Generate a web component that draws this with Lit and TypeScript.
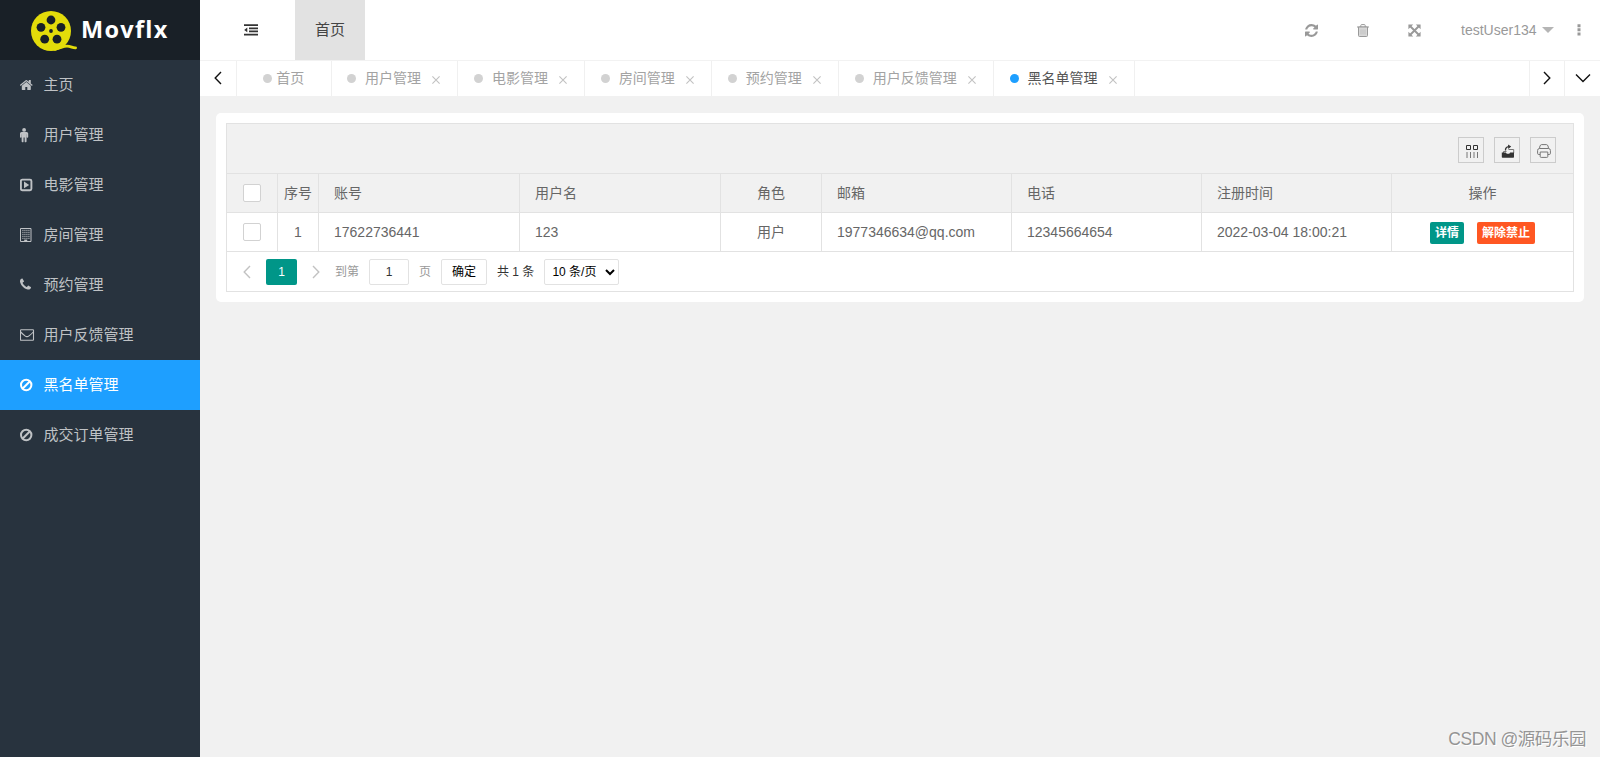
import { LitElement, html, svg, css } from "lit";
import { customElement } from "lit/decorators.js";
import { classMap } from "lit/directives/class-map.js";

const HOME = "M1472 992v480q0 26-19 45t-45 19h-384v-384h-256v384h-384q-26 0-45-19t-19-45v-480q0-1 .5-3t.5-3l575-474 575 474q1 2 1 6zm223-69l-62 74q-8 9-21 11h-3q-13 0-21-7l-692-577-692 577q-12 8-24 7-13-2-21-11l-62-74q-8-10-7-23.5t11-21.5l719-599q32-26 76-26t76 26l244 204v-195q0-14 9-23t23-9h192q14 0 23 9t9 23v408l219 182q10 8 11 21.5t-7 23.5z";
const PHONE = "M1600 1240q0 27-10 70.5t-21 68.5q-21 50-122 106-94 51-186 51-27 0-52.5-3.5t-57.5-12.5-47.5-14.5-55.5-20.5-49-18q-98-35-175-83-128-79-264.5-215.5t-215.5-264.5q-48-77-83-175-3-9-18-49t-20.5-55.5-14.5-47.5-12.5-57.5-3.5-52.5q0-92 51-186 56-101 106-122 25-11 68.5-21t70.5-10q14 0 21 3 18 6 53 76 11 19 30 54t35 63.5 31 53.5q3 4 17.5 25t21.5 35.5 7 28.5q0 20-28.5 50t-62 55-62 53-28.5 46q0 9 5 22.5t8.5 20.5 14 24 11.5 19q76 137 174 235t235 174q2 1 19 11.5t24 14 20.5 8.5 22.5 5q18 0 46-28.5t53-62 55-62 50-28.5q14 0 28.5 7t35.5 21.5 25 17.5q25 15 53.5 31t63.5 35 54 30q70 35 76 53 3 7 3 21z";
const REFRESH = "M1639 1056q0 5-1 7-64 268-268 434.5t-478 166.5q-146 0-282.5-55t-243.5-157l-129 129q-19 19-45 19t-45-19-19-45v-448q0-26 19-45t45-19h448q26 0 45 19t19 45-19 45l-137 137q71 66 161 102t187 36q134 0 250-65t186-179q11-17 53-117 8-23 30-23h192q13 0 22.5 9.5t9.5 22.5zm25-800v448q0 26-19 45t-45 19h-448q-26 0-45-19t-19-45 19-45l138-138q-148-137-349-137-134 0-250 65t-186 179q-11 17-53 117-8 23-30 23h-199q-13 0-22.5-9.5t-9.5-22.5v-7q65-268 270-434.5t480-166.5q146 0 284 55.5t245 156.5l130-129q19-19 45-19t45 19 19 45z";

const windows = [];
for (let r = 0; r < 5; r++) for (let c = 0; c < 4; c++) windows.push([2.3 + c * 2, 4.8 + r * 2]);

const ban = svg`<circle cx="6.2" cy="10" r="5.2" fill="none" stroke="currentColor" stroke-width="2"/><path d="M2.700 13.500 9.700 6.500" stroke="currentColor" stroke-width="2"/>`;
const icons: Record<string, unknown> = {
  home: svg`<path transform="translate(-.7 3) scale(.0078125)" fill="currentColor" d=${HOME}/>`,
  male: svg`<g fill="currentColor"><circle cx="4.1" cy="4.9" r="1.9"/><path d="M1.6 7h5A1.6 1.6 0 0 1 8.200 8.600V12a.75.75 0 0 1-1.500 0V9.200h-.15v7a.8.8 0 0 1-1.900.2V12.500h-1.100v3.900a.8.8 0 0 1-1.900-.2v-7H1.500V12A.75.75 0 0 1 0 12V8.600A1.600 1.600 0 0 1 1.600 7z"/></g>`,
  movie: svg`<rect x=".9" y="4.600" width="10.500" height="10.600" rx="1.400" fill="none" stroke="currentColor" stroke-width="1.900"/><path d="M4 6.600v6.600L9.200 9.900z" fill="currentColor"/>`,
  building: svg`<path d="M.5 3.500h10.500v13H.5z" fill="none" stroke="currentColor"/>${windows.map(([x, y]) => svg`<rect x=${x} y=${y} width="1.200" height="1.200" fill="currentColor" opacity=".8"/>`)}<path d="M4.200 14.600h3v2h-3z" fill="currentColor"/>`,
  phone: svg`<path transform="translate(-1.500 2.600) scale(.0078125)" fill="currentColor" d=${PHONE}/>`,
  mail: svg`<rect x=".5" y="4.800" width="13" height="10.500" rx=".6" fill="none" stroke="currentColor" stroke-width="1.100"/><path d="M.7 7q2 2 4.300 3.900Q7 12.400 9 10.900 11.500 9 13.300 7" fill="none" stroke="currentColor" stroke-width="1.100"/>`,
  ban,
};

const menu = [
  ["home", "主页"], ["male", "用户管理"], ["movie", "电影管理"], ["building", "房间管理"],
  ["phone", "预约管理"], ["mail", "用户反馈管理"], ["ban", "黑名单管理"], ["ban", "成交订单管理"],
];
const tabs = ["首页", "用户管理", "电影管理", "房间管理", "预约管理", "用户反馈管理", "黑名单管理"];
const active = "黑名单管理";

const chevron = (w: number, h: number, d: string, sw = 1.4) =>
  html`<svg width=${w} height=${h} viewBox="0 0 ${w} ${h}"><path d=${d} fill="none" stroke="currentColor" stroke-width=${sw}/></svg>`;

@customElement("app-root")
export class AppRoot extends LitElement {
  static styles = css`
    :host { display: flex; position: relative; height: 757px; overflow: hidden; background: #f1f1f1; color: #666;
      font: 14px/24px "Liberation Sans", "Noto Sans CJK SC", sans-serif; }
    * { box-sizing: border-box; }
    svg { display: block; flex: none; }
    .side { flex: none; width: 200px; background: #28333e; }
    .logo { display: flex; align-items: center; height: 60px; padding-left: 30px; background: #192027; }
    .brand { margin: -3px 0 0 3px; color: #fff; font: 700 23.500px/30px "Open Sans", sans-serif; letter-spacing: 1.300px; }
    .item { display: flex; align-items: center; height: 50px; padding-left: 20px; font-size: 15px; color: #bfc2c5; }
    .item svg { margin-right: -.6px; }
    .item.on { background: #1e9fff; color: #fff; }
    .main { flex: 1; min-width: 0; }
    .head { display: flex; align-items: center; height: 60px; background: #fff; color: #999; }
    .fold { display: flex; width: 95px; padding-left: 44px; color: #333; }
    .nav { width: 70px; line-height: 60px; text-align: center; background: #e2e2e2; color: #444; font-size: 15px; }
    .tools { display: flex; align-items: center; margin-left: auto; padding-right: 19.500px; }
    .ico { width: 51.500px; display: flex; justify-content: center; }
    .user { margin: 0 5px 0 20.500px; }
    .caret { margin-right: 23px; border: 6px solid transparent; border-top-color: #b5b5b5; border-bottom: 0; }
    .tabs { display: flex; height: 36px; border-top: 1px solid #f2f2f2; background: #fff; color: #999; }
    .arrow { display: flex; align-items: center; justify-content: center; width: 35px; border-left: 1px solid #f0f0f0; padding-bottom: 1px; color: #111; }
    .first { width: 36.800px; padding-left: 1px; border-left: 0; border-right: 1px solid #f0f0f0; }
    .arrow.last { width: 36px; }
    .tab { display: flex; align-items: center; padding: 0 17.400px 2px 15.500px; border-right: 1px solid #f0f0f0; white-space: nowrap; color: #a3a3a3; }
    .tab.start { padding: 0 26.300px 2px 26px; }
    .tab.on { color: #555; }
    .dot { width: 9px; height: 9px; margin: 2px 9px 0 0; border-radius: 50%; background: #d2d2d2; }
    .start .dot { margin-right: 4.500px; }
    .on .dot { background: #1e9fff; }
    .x { margin: 4px 0 0 11px; color: #c2c2c2; }
    .grow { flex: 1; }
    .card { margin: 17px 16px 16px; padding: 10px; border-radius: 5px; background: #fff; height: 189px; }
    .grid { border: 1px solid #e2e2e2; height: 169px; }
    .bar { display: flex; justify-content: flex-end; gap: 10px; height: 50px; padding: 13px 17px 0 0; background: #f1f1f1; border-bottom: 1px solid #e2e2e2; }
    .btn { display: flex; align-items: center; justify-content: center; width: 26px; height: 26px; padding: 1px 0 0 1px; border: 1px solid #ccc; color: #333; }
    .row { display: grid; grid-template-columns: 51px 41px 201px 201px 101px 190px 190px 190px 1fr; height: 39px; border-bottom: 1px solid #e2e2e2; }
    .row.th { background: #f1f1f1; }
    .cell { display: flex; align-items: center; padding: 0 15px; border-right: 1px solid #e2e2e2; white-space: nowrap; }
    .cell:last-child { border-right: 0; }
    .mid { justify-content: center; padding: 0; }
    .check { width: 18px; height: 18px; border: 1px solid #d2d2d2; border-radius: 2px; background: #fff; }
    .tag { height: 22px; margin-top: 2px; padding: 0 5px; border-radius: 2px; background: #009688; color: #fff; font-size: 12px; font-weight: 700; line-height: 22px; }
    .tag.red { margin-left: 13px; background: #ff5722; }
    .pager { display: flex; align-items: center; height: 40px; padding: 0 0 1px 16px; font-size: 12px; color: #333; }
    .pager > * { flex: none; }
    .pale { color: #c2c2c2; }
    .pale + .gray { margin-left: 15px; }
    .cur { width: 31px; margin: 0 15px 0 15px; border-radius: 2px; background: #009688; color: #fff; text-align: center; line-height: 26px; }
    .gray { color: #999; }
    .box { height: 26px; line-height: 24px; border: 1px solid #e2e2e2; border-radius: 2px; background: #fff; text-align: center; }
    .num { width: 40px; margin: 0 10px 0 10px; }
    .ok { width: 46px; margin: 0 10px; color: #000; }
    .size { width: 75px; margin-left: 10px; padding: 0 3px; font: 12px "Liberation Sans", "Noto Sans CJK SC", sans-serif; color: #000; text-align: left; }
    .mark { position: absolute; right: 14px; bottom: 5px; color: #959595; font-size: 17.500px; letter-spacing: -.45px; line-height: 26px; text-shadow: 1px 1px 0 #fff; white-space: nowrap; }
  `;

  render() {
    return html`
      <div class="side">
        <div class="logo">
          <svg width="48" height="44" viewBox="30 8 48 44">
            <circle cx="51" cy="31" r="20" fill="#e3dc0a"/>
            <path d="M55 49.300C61 48 63 46.200 67 46.200 71 46.200 72.500 48 75.600 47.800" fill="none" stroke="#e3dc0a" stroke-width="2.800" stroke-linecap="round"/>
            <g fill="#192027"><circle cx="51" cy="20" r="4.400"/><circle cx="41" cy="27.300" r="4.400"/><circle cx="61" cy="27.300" r="4.400"/><circle cx="44.700" cy="39.200" r="4.400"/><circle cx="57" cy="39.200" r="4.400"/><circle cx="51" cy="31" r="1.900"/></g>
          </svg>
          <span class="brand">Movflx</span>
        </div>
        ${menu.map(([icon, label]) => html`
          <div class=${classMap({ item: true, on: label === active })}>
            <svg width="24" height="20" viewBox="0 0 24 20">${icons[icon]}</svg>${label}
          </div>`)}
      </div>
      <div class="main">
        <div class="head">
          <div class="fold"><svg width="14" height="12" viewBox="0 0 14 12"><path fill="currentColor" d="M0 .3h14v1.800H0zM5 3.400h9v1.800H5zM5 6.500h9v1.800H5zM0 9.700h14v1.800H0zM3.300 3.500v4.800L.2 5.900z"/></svg></div>
          <div class="nav">首页</div>
          <div class="tools">
            <div class="ico"><svg width="13" height="13" viewBox="128 128 1536 1536"><path fill="currentColor" d=${REFRESH}/></svg></div>
            <div class="ico"><svg width="12" height="13" viewBox="0 0 12 13"><path d="M0 3h12M3.800 3V1.400q0-.8.8-.8h2.800q.8 0 .8.8V3" fill="none" stroke="currentColor"/><path d="M1.500 3h9v8.500q0 1-1 1h-7q-1 0-1-1z" fill="#d8d8d8" stroke="currentColor"/><path d="M4 5.500v5M6 5.500v5M8 5.500v5" stroke="#bbb" stroke-width=".8"/></svg></div>
            <div class="ico"><svg width="13" height="13" viewBox="0 0 13 13"><path d="M2 2l9 9M11 2l-9 9" stroke="currentColor" stroke-width="1.900"/><path fill="currentColor" d="M.4.4h4.800L.4 5.200zM12.600.4H7.800l4.800 4.800zM.4 12.600h4.800L.4 7.800zM12.600 12.600H7.800l4.800-4.800z"/></svg></div>
            <span class="user">testUser134</span><span class="caret"></span>
            <svg width="4" height="12" viewBox="0 0 4 12"><path fill="currentColor" d="M.5.2h3v3h-3zM.5 4.300h3v3h-3zM.5 8.400h3v3h-3z"/></svg>
          </div>
        </div>
        <div class="tabs">
          <div class="arrow first">${chevron(8, 14, "M7 1 1.200 7 7 13")}</div>
          ${tabs.map((t, i) => html`
            <div class=${classMap({ tab: true, start: i === 0, on: t === active })}>
              <span class="dot"></span>${t}${i ? html`<span class="x">${chevron(8, 8, "M.4.4l7.200 7.200M7.600.4.4 7.600", 1.1)}</span>` : ""}
            </div>`)}
          <div class="grow"></div>
          <div class="arrow">${chevron(8, 14, "M1 1l5.800 6L1 13")}</div>
          <div class="arrow last">${chevron(16, 10, "M1 1.500l7 7 7-7")}</div>
        </div>
        <div class="card"><div class="grid">
          <div class="bar">
            <div class="btn"><svg width="14" height="14" viewBox="0 0 14 14"><path d="M1.500 1.500h4v4h-4zM8.500 1.500h4v4h-4z" fill="none" stroke="currentColor"/><path d="M2 8v6M5.500 8v6M9 8v6M12.500 8v6" stroke="#777"/></svg></div>
            <div class="btn"><svg width="14" height="14" viewBox="0 0 14 14"><path d="M7.500 5.500h5.200V9M2.500 9V7.500h3" fill="none" stroke="#777"/><path d="M4.500 6.500Q4.200 3 7.800 2.600" fill="none" stroke="currentColor" stroke-width="1.300"/><path d="M7 .6l3.200 2L7.300 5zM.8 8.500h4l1 1.200h2.400l1-1.200h3.800V13q0 .7-.7.7H1.500q-.7 0-.7-.7z" fill="currentColor"/></svg></div>
            <div class="btn"><svg width="14" height="14" viewBox="0 0 14 14"><g fill="none" stroke="#777"><path d="M2.500 4.500Q2.500.7 4.500.6h5q2 .1 2 3.900M3 10.500H1.700Q.6 10.500.6 9.300V6.500Q.6 4.500 2.500 4.500h9q1.900 0 1.900 2v2.800q0 1.200-1.100 1.200H11"/><path d="M3.200 8h7.600v4.500q0 .9-1 .9H4.200q-1 0-1-.9z"/></g></svg></div>
          </div>
          <div class="row th">
            <div class="cell mid"><span class="check"></span></div><div class="cell mid">序号</div>
            <div class="cell">账号</div><div class="cell">用户名</div><div class="cell mid">角色</div>
            <div class="cell">邮箱</div><div class="cell">电话</div><div class="cell">注册时间</div><div class="cell mid">操作</div>
          </div>
          <div class="row">
            <div class="cell mid"><span class="check"></span></div><div class="cell mid">1</div>
            <div class="cell">17622736441</div><div class="cell">123</div><div class="cell mid">用户</div>
            <div class="cell">1977346634@qq.com</div><div class="cell">12345664654</div><div class="cell">2022-03-04 18:00:21</div>
            <div class="cell mid"><span class="tag">详情</span><span class="tag red">解除禁止</span></div>
          </div>
          <div class="pager">
            <span class="pale">${chevron(8, 14, "M7 1 1.200 7 7 13")}</span>
            <span class="cur">1</span>
            <span class="pale">${chevron(8, 14, "M1 1l5.800 6L1 13")}</span>
            <span class="gray">到第</span><span class="box num">1</span><span class="gray">页</span>
            <span class="box ok">确定</span><span>共 1 条</span>
            <select class="box size"><option>10 条/页</option></select>
          </div>
        </div></div>
      </div>
      <div class="mark">CSDN @源码乐园</div>
    `;
  }
}
